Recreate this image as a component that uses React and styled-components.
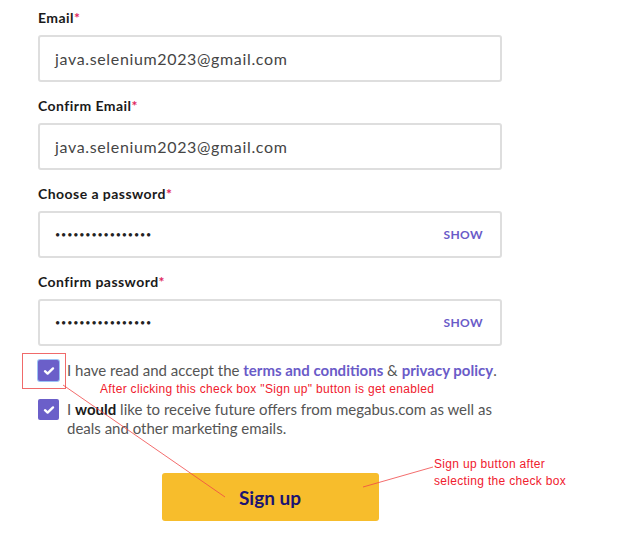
import React from 'react'
import styled, { createGlobalStyle } from 'styled-components'

const GlobalStyle = createGlobalStyle`
  html, body {
    margin: 0;
    padding: 0;
    background: #ffffff;
  }
  body {
    font-family: "Lato", "Open Sans", sans-serif;
    color: #1c1c1c;
  }
`

const Page = styled.div`
  position: relative;
  width: 640px;
  height: 558px;
  overflow: hidden;
`

const Form = styled.div`
  width: 464px;
  padding: 8px 0 0 38px;
  display: flex;
  flex-direction: column;
`

const Field = styled.div`
  display: flex;
  flex-direction: column;
  margin-bottom: 14px;
`

const Label = styled.div`
  font-size: 14px;
  font-weight: 700;
  line-height: 20px;
  letter-spacing: 0.45px;
  margin-bottom: 7px;
  color: #1a1a1a;

  span {
    color: #e0245e;
  }
`

const InputBox = styled.div`
  box-sizing: border-box;
  height: 47px;
  border: 2px solid #dedede;
  border-radius: 3px;
  display: flex;
  align-items: center;
  justify-content: space-between;
  padding: 0 17px 0 15px;
`

const Value = styled.span`
  font-size: 16px;
  color: #454545;
  letter-spacing: 0.65px;
`

const Dots = styled.span`
  font-size: 9px;
  color: #222;
  letter-spacing: 0.85px;
`

const Show = styled.span`
  font-size: 12px;
  font-weight: 700;
  letter-spacing: 0.4px;
  color: #6a5bc8;
`

const CheckRow = styled.div`
  display: flex;
  align-items: flex-start;
  gap: 8px;
  margin-top: ${p => p.$top}px;
`

const Box = styled.div`
  flex: none;
  width: 21px;
  height: 21px;
  border-radius: 2px;
  background: #6b5fc9;
  display: flex;
  align-items: center;
  justify-content: center;
  box-shadow: ${p => (p.$focus ? '0 0 0 1px #9cc3f5' : 'none')};
`

const CheckText = styled.div`
  font-size: 15px;
  line-height: 19px;
  color: #555;
  padding-top: 1px;

  b {
    font-weight: 700;
    color: #1a1a1a;
  }
  a {
    font-weight: 700;
    color: #6a5bc8;
    text-decoration: none;
  }
`

const ButtonRow = styled.div`
  display: flex;
  justify-content: center;
  margin-top: 35px;
`

const SignUp = styled.button`
  width: 217px;
  height: 48px;
  border: none;
  border-radius: 3px;
  background: #f7bd2c;
  color: #1b1472;
  font-family: "Lato", sans-serif;
  font-size: 19px;
  font-weight: 700;
`

const Overlay = styled.svg`
  position: absolute;
  left: 0;
  top: 0;
  pointer-events: none;
`

const Note = styled.div`
  position: absolute;
  left: ${p => p.$x}px;
  top: ${p => p.$y}px;
  font-family: "Liberation Sans", sans-serif;
  font-size: 12px;
  line-height: 17px;
  letter-spacing: 0.32px;
  color: #f0202e;
`

const Check = () => (
  <svg width="12" height="10" viewBox="0 0 12 10">
    <path d="M2 5.2 L4.6 7.6 L10 2.4" fill="none" stroke="#fff" strokeWidth="2.4" strokeLinecap="round" strokeLinejoin="round" />
  </svg>
)

const fields = [
  { label: 'Email', value: 'java.selenium2023@gmail.com' },
  { label: 'Confirm Email', value: 'java.selenium2023@gmail.com' },
  { label: 'Choose a password', password: true },
  { label: 'Confirm password', password: true },
]

export default function App() {
  return (
    <Page>
      <GlobalStyle />
      <Form>
        {fields.map(f => (
          <Field key={f.label}>
            <Label>{f.label}<span>*</span></Label>
            <InputBox>
              {f.password ? (
                <>
                  <Dots>••••••••••••••••</Dots>
                  <Show>SHOW</Show>
                </>
              ) : (
                <Value>{f.value}</Value>
              )}
            </InputBox>
          </Field>
        ))}

        <CheckRow $top={0}>
          <Box $focus><Check /></Box>
          <CheckText>
            I have read and accept the <a>terms and conditions</a> &amp; <a>privacy policy</a>.
          </CheckText>
        </CheckRow>
        <CheckRow $top={18}>
          <Box><Check /></Box>
          <CheckText>
            I <b>would</b> like to receive future offers from megabus.com as well as<br />
            deals and other marketing emails.
          </CheckText>
        </CheckRow>

        <ButtonRow>
          <SignUp>Sign up</SignUp>
        </ButtonRow>
      </Form>

      <Overlay width="640" height="558">
        <rect x="22.5" y="353.5" width="43" height="35" fill="none" stroke="#f06a6a" strokeWidth="1" />
        <line x1="63" y1="385" x2="225" y2="497" stroke="#f04848" strokeWidth="0.8" />
        <line x1="433" y1="467" x2="363" y2="487" stroke="#f04848" strokeWidth="0.8" />
      </Overlay>
      <Note $x={100} $y={381}>After clicking this check box "Sign up" button is get enabled</Note>
      <Note $x={434} $y={456}>Sign up button after<br />selecting the check box</Note>
    </Page>
  )
}
